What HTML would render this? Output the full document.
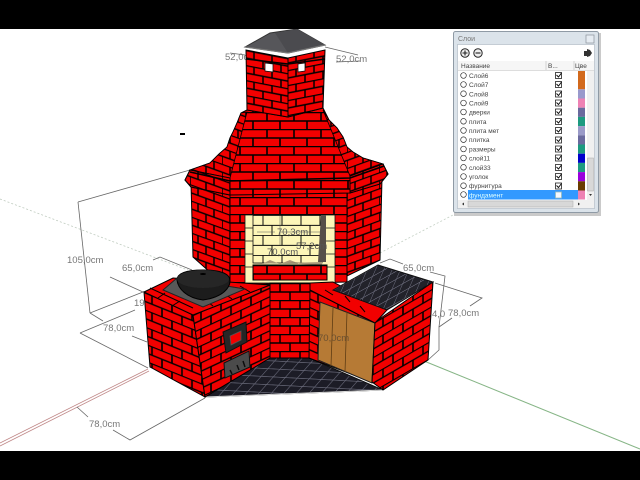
<!DOCTYPE html>
<html><head><meta charset="utf-8"><style>
html,body{margin:0;padding:0;background:#fff;width:640px;height:480px;overflow:hidden}
svg{position:absolute;left:0;top:0}
text{font-family:"Liberation Sans",sans-serif}
.d{font-size:9.5px;fill:#777}
</style></head><body>
<svg width="640" height="480" viewBox="0 0 640 480">
<defs>
<g id="b"><rect width="40" height="17" fill="#f20606"/><path d="M0 .5H40M0 9H40M8 0V8.5M28 0V8.5M18 8.5V17M38 8.5V17" stroke="#000" stroke-width="1.6" fill="none"/></g>
<pattern id="pL" width="40" height="17" patternUnits="userSpaceOnUse" patternTransform="translate(144 292) skewY(22)"><use href="#b"/></pattern>
<pattern id="pR" width="40" height="17" patternUnits="userSpaceOnUse" patternTransform="translate(193 315) skewY(-25)"><use href="#b"/></pattern>
<pattern id="pRC" width="40" height="17" patternUnits="userSpaceOnUse" patternTransform="translate(375 322) skewY(-30)"><use href="#b"/></pattern>
<pattern id="pD" width="40" height="17" patternUnits="userSpaceOnUse" patternTransform="translate(310 290) skewY(24)"><use href="#b"/></pattern>
<pattern id="pC1" width="36" height="15" patternUnits="userSpaceOnUse" patternTransform="translate(246 50) skewY(11)"><rect width="36" height="15" fill="#f20606"/><path d="M0 .5H36M0 8H36M8 0V7.5M26 0V7.5M17 7.5V15M35 7.5V15" stroke="#000" stroke-width="1.5" fill="none"/></pattern>
<pattern id="pC2" width="36" height="15" patternUnits="userSpaceOnUse" patternTransform="translate(288 55) skewY(-11)"><rect width="36" height="15" fill="#f20606"/><path d="M0 .5H36M0 8H36M8 0V7.5M26 0V7.5M17 7.5V15M35 7.5V15" stroke="#000" stroke-width="1.5" fill="none"/></pattern>
<pattern id="pF" width="54" height="17" patternUnits="userSpaceOnUse" patternTransform="translate(232 112)"><rect width="54" height="17" fill="#f20606"/><path d="M0 .5H54M0 9H54M8 0V8.5M35 0V8.5M21 8.5V17M48 8.5V17" stroke="#000" stroke-width="1.6" fill="none"/></pattern>
<pattern id="pH1" width="32" height="16" patternUnits="userSpaceOnUse" patternTransform="translate(190 120) skewY(20)"><rect width="32" height="16" fill="#f20606"/><path d="M0 .5H32M0 8.5H32M8 0V8M24 0V8M0 8V16M16 8V16" stroke="#000" stroke-width="1.5" fill="none"/></pattern>
<pattern id="pH2" width="32" height="16" patternUnits="userSpaceOnUse" patternTransform="translate(347 120) skewY(-20)"><rect width="32" height="16" fill="#f20606"/><path d="M0 .5H32M0 8.5H32M8 0V8M24 0V8M0 8V16M16 8V16" stroke="#000" stroke-width="1.5" fill="none"/></pattern>
<pattern id="pV" width="40" height="17" patternUnits="userSpaceOnUse" patternTransform="translate(270 283)"><rect width="40" height="17" fill="#f20606"/><path d="M0 .5H40M0 9H40M10 0V8.5M30 0V8.5M20 8.5V17" stroke="#000" stroke-width="1.5" fill="none"/></pattern>
<pattern id="pCr" width="38" height="20" patternUnits="userSpaceOnUse" patternTransform="translate(253 215)"><rect width="38" height="20" fill="#fdf6b8"/><path d="M0 .4H38M0 10.4H38M10 0V10M29 0V10M19 10V20" stroke="#111" stroke-width="1" fill="none"/></pattern>
<pattern id="tA" width="11" height="8" patternUnits="userSpaceOnUse" patternTransform="translate(333 290) skewY(-29) skewX(-30)"><rect width="11" height="8" fill="#20202a"/><path d="M0 .3H11M.3 0V8" stroke="#6f7080" stroke-width=".8" fill="none"/></pattern>
<pattern id="tB" width="12" height="8" patternUnits="userSpaceOnUse" patternTransform="translate(205 397) skewY(3) skewX(-40)"><rect width="12" height="8" fill="#1e1e28"/><path d="M0 .3H12M.3 0V8" stroke="#6b6c7c" stroke-width=".8" fill="none"/></pattern>
<filter id="s" x="-5%" y="-5%" width="110%" height="110%"><feGaussianBlur stdDeviation=".25"/></filter>
</defs>

<rect width="640" height="480" fill="#fff"/>

<g filter="url(#s)">
<path d="M0 199 188 270" stroke="#c0ccc0" stroke-width=".8" stroke-dasharray="2 2" fill="none"/>
<path d="M380 253 453 215" stroke="#c4d0c4" stroke-width=".8" stroke-dasharray="2 2" fill="none"/>
<path d="M424 361 640 449" stroke="#86b586" stroke-width="1" fill="none"/>
<path d="M0 443 148 369M0 446 149 371" stroke="#c08888" stroke-width=".8" fill="none"/>

<g stroke="#666" stroke-width=".8" fill="none">
<path d="M78 202 190 170"/>
<path d="M78 202 90 313"/>
<path d="M90 313 143 292"/>
<path d="M90 313 103 321"/>
<path d="M110 277 143 292"/>
<path d="M153 260 160 257 192 270"/>
<path d="M80 333 135 310"/>
<path d="M80 333 148 368"/>
<path d="M132 336 147 342"/>
<path d="M77 407 88 417"/>
<path d="M113 430 130 440 205 398"/>
<path d="M380 263 390 259 403 264M430 272 445 276 439 327 439 350 428 360"/>
<path d="M435 283 482 298 470 306M439 327 452 318"/>
<path d="M230 53 245 55"/>
<path d="M325 47 358 55M336 62 360 61"/>
</g>
<text class="d" x="67" y="263">105,0cm</text>
<text class="d" x="122" y="271">65,0cm</text>
<text class="d" x="134" y="306">19</text>
<text class="d" x="103" y="331">78,0cm</text>
<text class="d" x="89" y="427">78,0cm</text>
<text class="d" x="403" y="271">65,0cm</text>
<text class="d" x="432" y="317">4,0</text>
<text class="d" x="448" y="316">78,0cm</text>
<text class="d" x="225" y="60">52,0c</text>
<text class="d" x="336" y="62">52,0cm</text>

<rect x="180" y="133" width="5" height="2" fill="#000"/>

<!-- body -->
<polygon points="191,183 230,190 230,290 193,257" fill="url(#pH1)" stroke="#000"/>
<polygon points="347,186 382,178 380,260 347,276" fill="url(#pH2)" stroke="#000"/>
<polygon points="230,188 347,186 347,282 230,285" fill="url(#pF)" stroke="#000"/>

<!-- hood stepped -->
<polygon points="247,110 241,113 237,123 233,132 230,138 227,147 219,154 210,163 190,170 185,180 191,187 230,195 350,193 380,184 388,174 383,164 363,158 353,152 347,147 343,137 337,128 329,120 323,108 288,117" fill="url(#pF)" stroke="#000"/>
<polygon points="247,112 241,113 237,123 233,132 230,138 227,147 219,154 210,163 190,170 230,178" fill="url(#pH1)" stroke="#000" stroke-width=".8"/>
<polygon points="323,110 329,120 337,128 343,137 347,147 353,152 363,158 383,164 350,176" fill="url(#pH2)" stroke="#000" stroke-width=".8"/>
<polygon points="190,170 230,178 230,195 191,187 185,180" fill="url(#pH1)" stroke="#000"/>
<polygon points="350,176 383,164 388,174 380,184 350,193" fill="url(#pH2)" stroke="#000"/>
<path d="M190 172 230 181 350 178 384 166" stroke="#000" stroke-width="1.6" fill="none"/>

<!-- chimney -->
<polygon points="246,50 288,58 288,117 247,110" fill="url(#pC1)" stroke="#000"/>
<polygon points="288,58 325,50 323,108 288,117" fill="url(#pC2)" stroke="#000"/>
<polygon points="265,63 273,64 273,72 265,71" fill="#fff" stroke="#111" stroke-width=".8"/>
<polygon points="298,64 305,63 305,71 298,72" fill="#fff" stroke="#111" stroke-width=".8"/>
<path d="M246 59 288 64 325 59" stroke="#000" stroke-width="1.4" fill="none"/>
<polygon points="245,47 270,33 297,29 325,45 288,53" fill="#56565a" stroke="#333"/>
<polygon points="275,33 297,29 325,45 288,53" fill="#4c4c50"/>
<path d="M245 47 288 53 325 45" stroke="#777" stroke-width="1.2" fill="none"/>

<!-- firebox -->
<rect x="245" y="215" width="90" height="68" fill="#fdf6b8" stroke="#111" stroke-width=".8"/>
<path d="M245 228H253M245 241H253M245 254H253M245 267H253M322 228H335M322 241H335M322 254H335M322 267H335" stroke="#111" stroke-width=".8" fill="none"/>
<rect x="253" y="215" width="69" height="48" fill="url(#pCr)" stroke="#111" stroke-width=".8"/>
<polygon points="321,215 318,262 326,262 326,215" fill="#55504a"/>
<polygon points="253,264 322,262 322,265 300,264 290,260 280,264 270,260 262,264" fill="#a89878"/>
<rect x="253" y="265" width="74" height="15" fill="url(#pF)" stroke="#000"/>
<text class="d" x="277" y="235" style="fill:#555">70,3cm</text>
<text class="d" x="296" y="249" style="fill:#555">57,2cm</text>
<text class="d" x="267" y="255" style="fill:#555">70,0cm</text>
<path d="M257 232H275M280 232H320M280 216V245" stroke="#555" stroke-width=".5" fill="none"/>

<!-- floor -->
<polygon points="270,358 309,358 383,390 205,397" fill="url(#tB)" stroke="#111"/>
<path d="M205 397 383 390" stroke="#ddd" stroke-width="1" fill="none"/>

<!-- center column -->
<rect x="270" y="283" width="40" height="75" fill="url(#pV)" stroke="#000"/>

<!-- right cabinet -->
<polygon points="310,290 375,323 372,382 309,358" fill="url(#pD)" stroke="#000"/>
<polygon points="320,302 375,323 372,383 318,360" fill="#b67a34" stroke="#222"/>
<path d="M333 308 331 366M347 312 345 372" stroke="#5f3d14" stroke-width=".8" fill="none"/>
<text class="d" x="318" y="341" style="fill:#6a5030">70,0cm</text>
<polygon points="375,322 433,282 428,360 383,390 372,382" fill="url(#pRC)" stroke="#000"/>
<polygon points="310,283 333,282 387,310 375,323 310,290" fill="#f20606" stroke="#000"/>
<path d="M333 295 325 290M350 302 345 296M365 312 360 306" stroke="#000" fill="none"/>
<polygon points="333,290 378,265 433,282 387,310" fill="url(#tA)" stroke="#111"/>

<!-- left cabinet -->
<polygon points="144,292 193,315 205,397 150,367" fill="url(#pL)" stroke="#000"/>
<polygon points="193,315 270,285 270,358 205,397" fill="url(#pR)" stroke="#000"/>
<polygon points="144,292 173,278 270,285 193,315" fill="#f20606" stroke="#000"/>
<path d="M150 288 193 308M165 293 158 298M180 301 172 306M213 306 205 300M232 299 222 292M250 292 240 286" stroke="#000" fill="none"/>
<polygon points="163,290 177,278 245,289 203,307" fill="#585858" stroke="#222"/>
<path d="M177 280C177 273 187 270 203 270C221 270 230 274 230 281C230 287 224 297 203 300C187 298 178 289 177 280Z" fill="#1a1a1a" stroke="#000"/>
<ellipse cx="203" cy="279" rx="26" ry="9" fill="#262626"/>
<ellipse cx="203" cy="274" rx="3" ry="1" fill="#000"/>

<!-- oven doors -->
<polygon points="223,332 246,322 247,342 226,353" fill="#262626" stroke="#111"/>
<polygon points="230,336 241,331 241,340 231,345" fill="#f20606" stroke="#555" stroke-width=".8"/>
<polygon points="224,363 249,351 250,367 225,378" fill="#4c4c4c" stroke="#111"/>
<path d="M230 370 232 374M237 365 239 370M243 361 245 367" stroke="#111" stroke-width="1.5" fill="none"/>
</g>

<!-- layer panel -->
<g filter="url(#s)">
<rect x="454" y="33" width="147" height="183" fill="#666" opacity=".35"/>
<rect x="453.5" y="31.5" width="145" height="181" rx="2" fill="#dbe3ea" stroke="#8f9aa5"/>
<text x="458" y="41" font-size="7" fill="#777">Слои</text>
<rect x="586" y="35" width="8" height="8" fill="#e6ecf2" stroke="#8a929a" stroke-width=".7"/>
<rect x="457.5" y="44.5" width="137" height="164" fill="#fff" stroke="#aab4be" stroke-width=".6"/>
<circle cx="465" cy="53" r="4.2" fill="#eee" stroke="#222"/><path d="M462.5 53h5M465 50.5v5" stroke="#222" stroke-width="1.1"/>
<circle cx="478" cy="53" r="4.2" fill="#eee" stroke="#222"/><path d="M475.5 53h5" stroke="#222" stroke-width="1.1"/>
<path d="M584 51h3v-2l3 1 2 3-2 3-3 1v-1h-3z" fill="#333"/>
<rect x="458" y="61" width="136" height="9" fill="#f6f6f6"/>
<path d="M458 70.5H594M546 61V70M574 61V70" stroke="#bbb" stroke-width=".6"/>
<text font-size="6.5" fill="#444" x="461" y="68">Название</text>
<text font-size="6.5" fill="#444" x="548" y="68">В...</text>
<text font-size="6.5" fill="#444" x="575" y="68">Цве</text>

<rect x="468" y="190" width="110" height="9.5" fill="#3399ff"/>

<g font-size="6.5" fill="#444">
<text x="469" y="78">Слой6</text>
<text x="469" y="87">Слой7</text>
<text x="469" y="96.5">Слой8</text>
<text x="469" y="105.5">Слой9</text>
<text x="469" y="114.5">дверки</text>
<text x="469" y="124">плита</text>
<text x="469" y="133">плита мет</text>
<text x="469" y="142">плитка</text>
<text x="469" y="151.5">размеры</text>
<text x="469" y="160.5">слой11</text>
<text x="469" y="170">слой33</text>
<text x="469" y="179">уголок</text>
<text x="469" y="188">фурнитура</text>
<text x="469" y="197.5" fill="#dff">фундамент</text>
</g>
<g fill="#fff" stroke="#333" stroke-width=".7">
<circle cx="463.5" cy="75.5" r="2.8"/><circle cx="463.5" cy="84.5" r="2.8"/><circle cx="463.5" cy="93.7" r="2.8"/><circle cx="463.5" cy="103" r="2.8"/><circle cx="463.5" cy="112" r="2.8"/><circle cx="463.5" cy="121.3" r="2.8"/><circle cx="463.5" cy="130.5" r="2.8"/><circle cx="463.5" cy="139.7" r="2.8"/><circle cx="463.5" cy="149" r="2.8"/><circle cx="463.5" cy="158" r="2.8"/><circle cx="463.5" cy="167.3" r="2.8"/><circle cx="463.5" cy="176.5" r="2.8"/><circle cx="463.5" cy="185.7" r="2.8"/><circle cx="463.5" cy="194.5" r="2.8"/>
</g>
<g fill="#fff" stroke="#222" stroke-width=".8">
<rect x="555.5" y="72.5" width="6" height="6"/><rect x="555.5" y="81.5" width="6" height="6"/><rect x="555.5" y="91" width="6" height="6"/><rect x="555.5" y="100" width="6" height="6"/><rect x="555.5" y="109" width="6" height="6"/><rect x="555.5" y="118.5" width="6" height="6"/><rect x="555.5" y="127.5" width="6" height="6"/><rect x="555.5" y="137" width="6" height="6"/><rect x="555.5" y="146" width="6" height="6"/><rect x="555.5" y="155" width="6" height="6"/><rect x="555.5" y="164.5" width="6" height="6"/><rect x="555.5" y="173.5" width="6" height="6"/><rect x="555.5" y="183" width="6" height="6"/><rect x="555.5" y="192" width="6" height="6" fill="#f4f8ff" stroke="#9bb"/>
</g>
<path d="M556.5 75l2 2 3-4M556.5 84l2 2 3-4M556.5 93.5l2 2 3-4M556.5 102.5l2 2 3-4M556.5 111.5l2 2 3-4M556.5 121l2 2 3-4M556.5 130l2 2 3-4M556.5 139.5l2 2 3-4M556.5 148.5l2 2 3-4M556.5 157.5l2 2 3-4M556.5 167l2 2 3-4M556.5 176l2 2 3-4M556.5 185.5l2 2 3-4" fill="none" stroke="#111" stroke-width="1"/>

<rect x="578" y="71" width="7" height="9" fill="#d2691e"/>
<rect x="578" y="80" width="7" height="9.3" fill="#d2691e"/>
<rect x="578" y="89.3" width="7" height="9.2" fill="#9999cc"/>
<rect x="578" y="98.5" width="7" height="9.2" fill="#ee82b4"/>
<rect x="578" y="107.7" width="7" height="9.2" fill="#6a6a9e"/>
<rect x="578" y="116.9" width="7" height="9.2" fill="#1a9a80"/>
<rect x="578" y="126.1" width="7" height="9.2" fill="#9a9ac8"/>
<rect x="578" y="135.3" width="7" height="9.2" fill="#6a6a9e"/>
<rect x="578" y="144.5" width="7" height="9.2" fill="#1a9a80"/>
<rect x="578" y="153.7" width="7" height="9.2" fill="#0000cc"/>
<rect x="578" y="162.9" width="7" height="9.2" fill="#1a9a80"/>
<rect x="578" y="172.1" width="7" height="9.2" fill="#9900dd"/>
<rect x="578" y="181.3" width="7" height="9.2" fill="#6b3a00"/>
<rect x="578" y="190.5" width="7" height="9" fill="#ee82b4"/>

<rect x="587" y="71" width="7" height="129" fill="#f0f0f0"/>
<rect x="587.5" y="158" width="6" height="33" fill="#d8d8d8" stroke="#aaa" stroke-width=".5"/>
<path d="M589 194h3l-1.5 2z" fill="#333"/>
<rect x="458" y="200" width="136" height="8" fill="#f0f0f0"/>
<rect x="468" y="201" width="105" height="6" fill="#d8d8d8" stroke="#aaa" stroke-width=".5"/>
<path d="M462 204l2-1.5v3zM580 204l-2-1.5v3z" fill="#333"/>
</g>

<rect x="0" y="0" width="640" height="29" fill="#000"/>
<rect x="0" y="451" width="640" height="29" fill="#000"/>
</svg>
</body></html>
